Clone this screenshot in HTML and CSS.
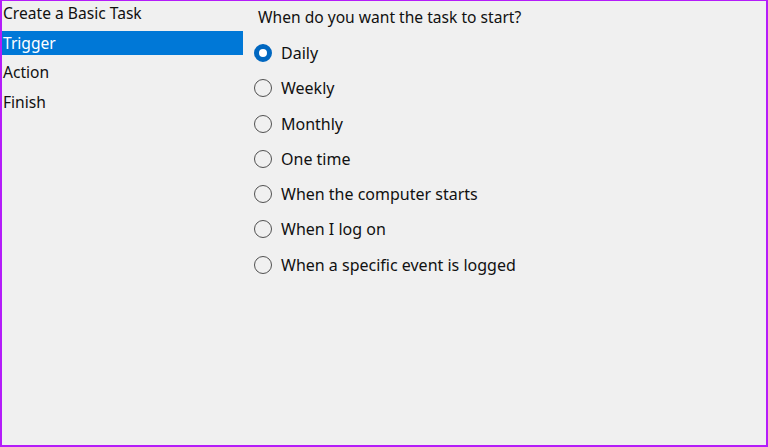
FILE: index.html
```html
<!DOCTYPE html>
<html>
<head>
<meta charset="utf-8">
<link rel="stylesheet" href="styles.css">
</head>
<body>
<div class="frame">
  <ul class="steps">
    <li class="step">Create a Basic Task</li>
    <li class="step selected">Trigger</li>
    <li class="step">Action</li>
    <li class="step">Finish</li>
  </ul>
  <div class="content">
    <div class="question">When do you want the task to start?</div>
    <div class="options">
      <label class="option"><span class="radio checked"></span><span class="label">Daily</span></label>
      <label class="option"><span class="radio"></span><span class="label">Weekly</span></label>
      <label class="option"><span class="radio"></span><span class="label">Monthly</span></label>
      <label class="option"><span class="radio"></span><span class="label">One time</span></label>
      <label class="option"><span class="radio"></span><span class="label">When the computer starts</span></label>
      <label class="option"><span class="radio"></span><span class="label">When I log on</span></label>
      <label class="option"><span class="radio"></span><span class="label">When a specific event is logged</span></label>
    </div>
  </div>
</div>
</body>
</html>
```
FILE: styles.css
```css
html, body {
  margin: 0;
  padding: 0;
  background: #f0f0f0;
}
.frame {
  box-sizing: border-box;
  width: 768px;
  height: 447px;
  border-style: solid;
  border-color: #b41cfa;
  border-width: 1px 2px 2px 2px;
  background: #f0f0f0;
  display: flex;
  font-family: "Noto Sans", "Open Sans", sans-serif;
  font-size: 15.6px;
  color: #111;
}
.steps {
  list-style: none;
  margin: 0;
  padding: 0;
  width: 241px;
  display: flex;
  flex-direction: column;
  gap: 5.5px;
}
.step {
  height: 24px;
  line-height: 24px;
  padding-left: 1px;
  white-space: nowrap;
}
.step.selected {
  background: #0078d7;
  color: #fff;
}
.content {
  flex: 1;
  padding: 5px 0 0 15px;
}
.question {
  line-height: 22px;
  height: 22px;
}
.options {
  margin-top: 7.4px;
  display: flex;
  flex-direction: column;
  font-size: 16px;
}
.option {
  height: 35.25px;
  display: flex;
  align-items: center;
  gap: 9px;
}
.radio {
  box-sizing: border-box;
  width: 18px;
  height: 18px;
  border-radius: 50%;
  border: 1.5px solid #505050;
  background: #f0f0f0;
  flex: none;
  margin-left: -4px;
}
.radio.checked {
  border: 5px solid #0067c0;
  background: #fff;
}
```
